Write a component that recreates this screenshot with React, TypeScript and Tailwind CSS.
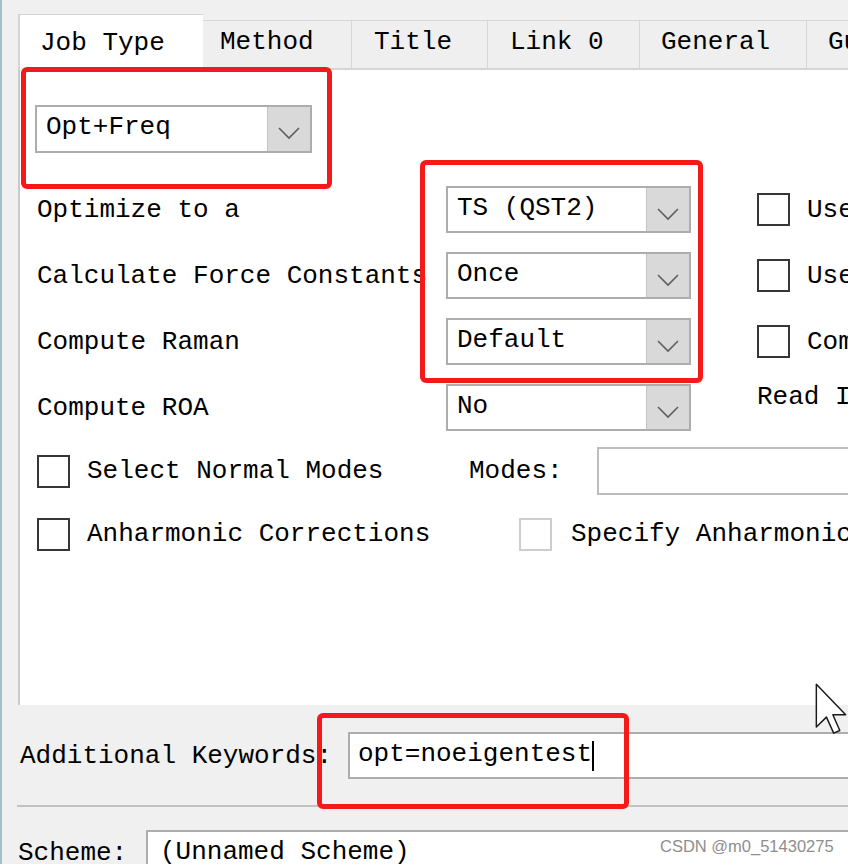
import React from 'react';

const mono = "font-['Liberation_Mono',monospace] text-[26px] leading-[30px] text-black whitespace-nowrap";

const Chevron: React.FC = () => (
  <svg width="24" height="14" viewBox="0 0 24 14" fill="none">
    <polyline points="2,2 12,12 22,2" stroke="#5f5f5f" strokeWidth="1.6" />
  </svg>
);

const Combo: React.FC<{ value: string; width: string; height?: string }> = ({ value, width, height = 'h-[47px]' }) => (
  <div className={`flex shrink-0 ${width} ${height} border-2 border-[#adadad] bg-white`}>
    <div className={`flex-1 flex items-center pl-[9px] pb-[4px] ${mono}`}>{value}</div>
    <div className="w-[43px] bg-[#d9d9d9] border-l border-[#c4c4c4] flex items-center justify-center pt-[8px]">
      <Chevron />
    </div>
  </div>
);

const Check: React.FC<{ disabled?: boolean }> = ({ disabled }) => (
  <div
    className={`w-[33px] h-[33px] shrink-0 bg-white border-2 ${disabled ? 'border-[#cdcdcd]' : 'border-[#363636]'}`}
  />
);

const tabs = [
  { label: 'Job Type', w: 'w-[185px]', pl: 'pl-[20px]' },
  { label: 'Method', w: 'w-[149px]', pl: 'pl-[17px]' },
  { label: 'Title', w: 'w-[136px]', pl: 'pl-[22px]' },
  { label: 'Link 0', w: 'w-[152px]', pl: 'pl-[22px]' },
  { label: 'General', w: 'w-[167px]', pl: 'pl-[21px]' },
  { label: 'Guess', w: 'w-[120px]', pl: 'pl-[21px]' },
];

const rows = [
  { label: 'Optimize to a', value: 'TS (QST2)', right: 'Use RFO step' },
  { label: 'Calculate Force Constants', value: 'Once', right: 'Use tight convergence criteria' },
  { label: 'Compute Raman', value: 'Default', right: 'Compute VCD' },
];

export default function App() {
  return (
    <div className="relative w-[848px] h-[864px] overflow-hidden bg-[#f0f0f0] border-l-2 border-[#9dc2cb]">
      {/* tab strip */}
      <div className="flex pt-[14px] ml-[16px]">
        {tabs.map((t, i) =>
          i === 0 ? (
            <div
              key={t.label}
              className={`${t.w} ${t.pl} h-[56px] shrink-0 bg-white border-l-2 border-t border-[#d4d4d4] flex items-center ${mono}`}
            >
              {t.label}
            </div>
          ) : (
            <div
              key={t.label}
              className={`${t.w} ${t.pl} h-[50px] mt-[6px] shrink-0 bg-[#efefef] border-t border-r border-b-2 border-[#d6d6d6] flex items-center pb-[6px] ${mono}`}
            >
              {t.label}
            </div>
          )
        )}
      </div>

      {/* panel */}
      <div className="ml-[16px] h-[635px] bg-white border-l-2 border-[#cacaca] flex flex-col pl-[15px]">
        <div className="mt-[35px]">
          <Combo value="Opt+Freq" width="w-[277px]" height="h-[48px]" />
        </div>

        <div className="mt-[33px] flex flex-col gap-[19px]">
          {rows.map((r) => (
            <div key={r.label} className="flex items-center h-[47px]">
              <div className={`w-[411px] shrink-0 pl-[2px] overflow-hidden ${mono}`}>{r.label}</div>
              <Combo value={r.value} width="w-[245px]" />
              <div className="ml-[66px] flex items-center gap-[17px]">
                <Check />
                <span className={mono}>{r.right}</span>
              </div>
            </div>
          ))}
          <div className="flex items-center h-[47px]">
            <div className={`w-[411px] shrink-0 pl-[2px] ${mono}`}>Compute ROA</div>
            <Combo value="No" width="w-[245px]" />
            <div className={`ml-[66px] self-start -mt-[2px] ${mono}`}>Read Incident Light Frequencies</div>
          </div>
        </div>

        <div className="mt-[16px] flex items-center h-[48px]">
          <div className="w-[432px] shrink-0 flex items-center gap-[17px] pl-[2px]">
            <Check />
            <span className={mono}>Select Normal Modes</span>
          </div>
          <span className={`ml-[2px] ${mono} text-[#8a8a8a]`}>Modes:</span>
          <div className="ml-[34px] w-[300px] h-[48px] shrink-0 border-2 border-[#bdbdbd] bg-white" />
        </div>

        <div className="mt-[15px] flex items-center h-[48px]">
          <div className="w-[484px] shrink-0 flex items-center gap-[17px] pl-[2px]">
            <Check />
            <span className={mono}>Anharmonic Corrections</span>
          </div>
          <Check disabled />
          <span className={`ml-[19px] ${mono} text-[#8a8a8a]`}>Specify Anharmonic Modes</span>
        </div>
      </div>

      {/* bottom area */}
      <div className="mt-[27px] flex items-center h-[47px] pl-[18px]">
        <div className={`w-[328px] shrink-0 ${mono}`}>Additional Keywords:</div>
        <div className="flex-1 h-[47px] border-2 border-r-0 border-[#adadad] bg-white flex items-center pl-[8px] pb-[4px]">
          <span className={mono}>opt=noeigentest</span>
          <span className="w-[2px] h-[30px] bg-black mt-[4px]" />
        </div>
      </div>

      <div className="mt-[26px] ml-[15px] border-t-2 border-[#c2c2c2]" />

      <div className="mt-[23px] flex items-start pl-[16px]">
        <div className={`w-[128px] shrink-0 pt-[8px] ${mono}`}>Scheme:</div>
        <div className="flex-1 h-[48px] border-2 border-r-0 border-[#adadad] bg-white pl-[12px] pt-[5px]">
          <span className={mono}>(Unnamed Scheme)</span>
        </div>
      </div>

      {/* annotation boxes */}
      <div className="absolute left-[19px] top-[67px] w-[311px] h-[122px] border-[5px] border-[#f41a1a] rounded-[6px]" />
      <div className="absolute left-[418px] top-[160px] w-[283px] h-[223px] border-[5px] border-[#f41a1a] rounded-[6px]" />
      <div className="absolute left-[315px] top-[713px] w-[312px] h-[96px] border-[5px] border-[#f41a1a] rounded-[6px]" />

      {/* mouse pointer */}
      <svg className="absolute left-[813px] top-[683px]" width="32" height="52" viewBox="0 0 12 19.5">
        <path
          d="M0.5 0.5 L0.5 16.5 L4.3 12.8 L7 18.8 L9.3 17.8 L6.7 11.9 L11.5 11.9 Z"
          fill="white"
          stroke="#1a1a1a"
          strokeWidth="0.55"
          strokeLinejoin="round"
        />
      </svg>

      {/* watermark */}
      <div className="absolute left-[658px] top-[836px] font-['Liberation_Sans',Arial,sans-serif] text-[16.5px] leading-[20px] text-[#8e8e8e] whitespace-nowrap">
        CSDN @m0_51430275
      </div>
    </div>
  );
}
